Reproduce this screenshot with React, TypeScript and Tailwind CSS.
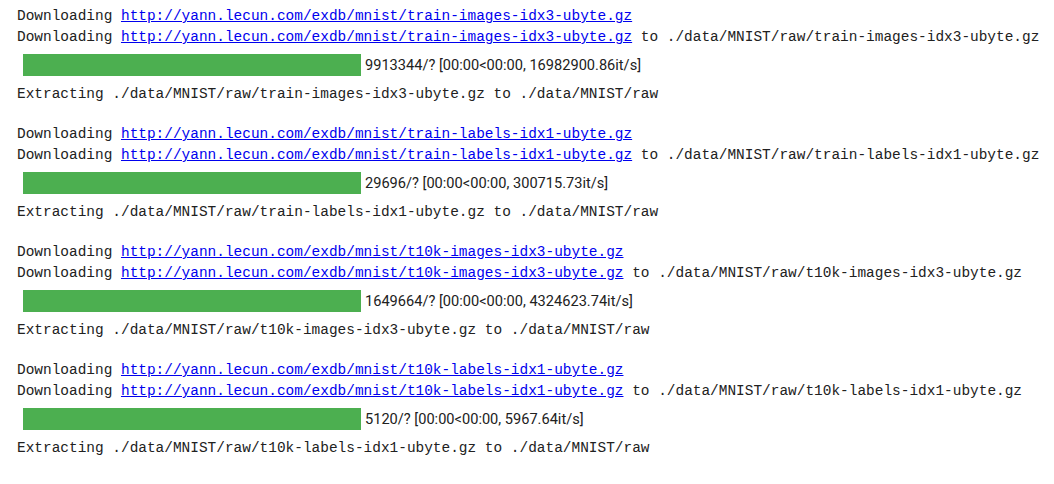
const base = "http://yann.lecun.com/exdb/mnist/"

const files = [
  { name: "train-images-idx3-ubyte.gz", stats: "9913344/? [00:00<00:00, 16982900.86it/s]" },
  { name: "train-labels-idx1-ubyte.gz", stats: "29696/? [00:00<00:00, 300715.73it/s]" },
  { name: "t10k-images-idx3-ubyte.gz", stats: "1649664/? [00:00<00:00, 4324623.74it/s]" },
  { name: "t10k-labels-idx1-ubyte.gz", stats: "5120/? [00:00<00:00, 5967.64it/s]" },
]

function Link({ href }: { href: string }) {
  return (
    <a href={href} className="text-[#0000ee] underline">
      {href}
    </a>
  )
}

export default function App() {
  return (
    <div className="min-h-[484px] w-[1054px] bg-white pt-[6px] pl-[17px] text-[14.45px] leading-[20px] text-[#212121] [font-family:'Liberation_Mono',monospace]">
      {files.map((f) => (
        <div key={f.name} className="flex flex-col pb-[20px]">
          <div className="whitespace-pre">
            Downloading <Link href={base + f.name} />
          </div>
          <div className="whitespace-pre pt-[1px]">
            Downloading <Link href={base + f.name} /> to ./data/MNIST/raw/{f.name}
          </div>
          <div className="flex h-[37px] items-start pt-[7px] pl-[6px]">
            <div className="h-[22px] w-[338px] bg-[#4caf50]" />
            <span className="pl-[4px] text-[14.6px] leading-[22px] text-[#212121] [font-family:Roboto,sans-serif]">
              {f.stats}
            </span>
          </div>
          <div className="whitespace-pre">
            Extracting ./data/MNIST/raw/{f.name} to ./data/MNIST/raw
          </div>
        </div>
      ))}
    </div>
  )
}
